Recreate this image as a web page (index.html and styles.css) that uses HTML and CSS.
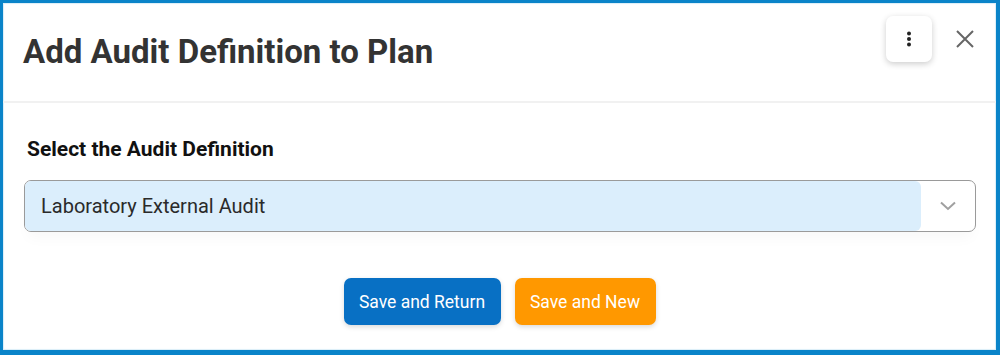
FILE: index.html
```html
<!DOCTYPE html>
<html lang="en">
<head>
    <meta charset="UTF-8">
    <meta name="viewport" content="width=device-width, initial-scale=1.0">
    <title>Add Audit Definition to Plan</title>
    <link rel="stylesheet" href="styles.css">
</head>
<body>
    <div class="dialog">
        <div class="dialog-header">
            <h2>Add Audit Definition to Plan</h2>
            <div class="header-actions">
                <button class="menu-btn" aria-label="More">
                    <svg width="6" height="16" viewBox="0 0 6 16">
                        <circle cx="3" cy="2.5" r="2" fill="#222"/>
                        <circle cx="3" cy="8" r="2" fill="#222"/>
                        <circle cx="3" cy="13.5" r="2" fill="#222"/>
                    </svg>
                </button>
                <button class="close-btn" aria-label="Close">
                    <svg width="18" height="18" viewBox="0 0 18 18">
                        <path d="M1 1 L17 17 M17 1 L1 17" stroke="#666" stroke-width="2" fill="none"/>
                    </svg>
                </button>
            </div>
        </div>

        <div class="dialog-body">
            <label class="field-label">Select the Audit Definition</label>
            <div class="select">
                <div class="select-value">Laboratory External Audit</div>
                <div class="select-arrow">
                    <svg width="16" height="10" viewBox="0 0 16 10">
                        <path d="M1 1.5 L8 8 L15 1.5" stroke="#a0a0a0" stroke-width="2" fill="none"/>
                    </svg>
                </div>
            </div>
        </div>

        <div class="dialog-footer">
            <button class="btn btn-primary">Save and Return</button>
            <button class="btn btn-warning">Save and New</button>
        </div>
    </div>
</body>
</html>
```

FILE: styles.css
```css
* {
    box-sizing: border-box;
}
body {
    margin: 0;
    font-family: Roboto, "Liberation Sans", Arial, sans-serif;
    background-color: #0a84c9;
}
.dialog {
    width: 1000px;
    height: 355px;
    background: #fff;
    border-style: solid;
    border-color: #0a84c9;
    border-width: 3px 4px 5px 3px;
    box-shadow: inset 0 0 1px 1px rgba(10, 132, 201, 0.15);
}
.dialog-header {
    height: 100px;
    display: flex;
    justify-content: space-between;
    align-items: flex-start;
    border-bottom: 2px solid #f1f1f1;
}
.dialog-header h2 {
    margin: 29px 0 0 20px;
    font-size: 33px;
    line-height: 40px;
    font-weight: 700;
    color: #333;
}
.header-actions {
    display: flex;
    align-items: center;
    gap: 24px;
    margin: 13px 22px 0 0;
}
.menu-btn {
    width: 46px;
    height: 46px;
    border: none;
    border-radius: 7px;
    background: #fff;
    box-shadow: 0 2px 6px rgba(0, 0, 0, 0.2);
    display: flex;
    align-items: center;
    justify-content: center;
    padding: 0;
}
.close-btn {
    border: none;
    background: none;
    padding: 0;
    display: flex;
}
.dialog-body {
    padding: 34px 20px 0 21px;
}
.field-label {
    display: block;
    margin-left: 3px;
    font-size: 21px;
    line-height: 24px;
    font-weight: 700;
    color: #111;
}
.select {
    margin-top: 19px;
    height: 52px;
    border: 1px solid #9a9a9a;
    border-radius: 7px;
    display: flex;
    align-items: stretch;
    box-shadow: 0 10px 14px -4px rgba(0, 0, 0, 0.03);
}
.select-value {
    flex: 1;
    background: #dbeefc;
    border-radius: 6px;
    padding-left: 16px;
    display: flex;
    align-items: center;
    font-size: 20px;
    color: #2a2a2a;
}
.select-arrow {
    width: 54px;
    display: flex;
    align-items: center;
    justify-content: center;
}
.dialog-footer {
    display: flex;
    justify-content: center;
    gap: 14px;
    margin-top: 46px;
}
.btn {
    height: 47px;
    border: none;
    border-radius: 7px;
    color: #fff;
    font-family: Roboto, "Liberation Sans", Arial, sans-serif;
    font-size: 17.5px;
    padding: 0 10px;
    box-shadow: 0 2px 5px rgba(0, 0, 0, 0.15);
}
.btn-primary {
    width: 157px;
    background: #0870c4;
}
.btn-warning {
    width: 141px;
    background: #ff9800;
}
```
